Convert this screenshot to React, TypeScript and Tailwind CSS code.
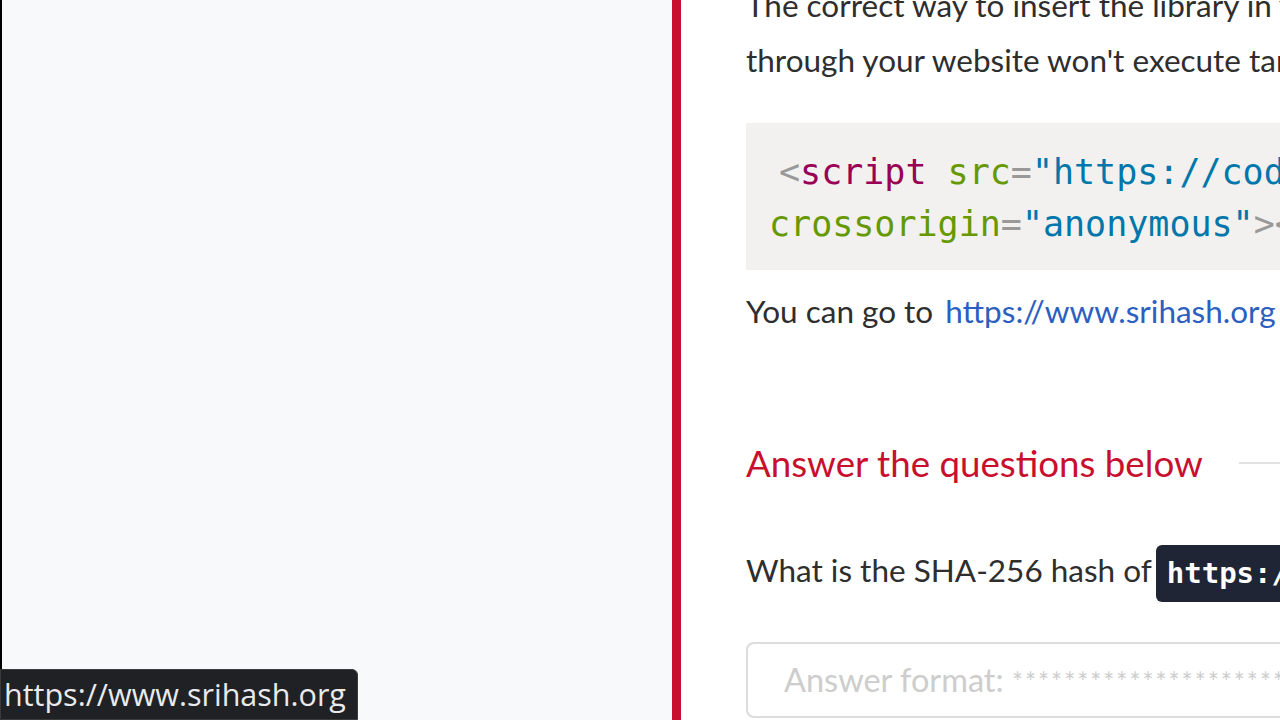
import React from "react";

const sans = "font-['Lato','Noto_Sans',sans-serif]";
const mono = "font-['DejaVu_Sans_Mono','Liberation_Mono',monospace]";

const App = () => {
  return (
    <div className="relative flex h-[720px] w-[1280px] overflow-hidden bg-white">
      {/* left pane */}
      <div className="h-full w-[672px] shrink-0 border-l-2 border-black bg-[#f8f9fb]" />
      {/* accent bar */}
      <div className="h-full w-[9px] shrink-0 bg-[#c8102e]" />

      {/* content pane */}
      <div className={`h-full flex-1 overflow-hidden pl-[65px] ${sans}`}>
        <div className="w-[900px] text-[31.5px] text-[#2e2e2e]">
          <p className="mt-[-22px] leading-[55px] whitespace-nowrap">
            The correct way to insert the library in your HTML file to ensure it is loaded
            <br />
            through your website won't execute tampered code
          </p>

          <pre
            className={`mt-[35px] h-[147px] bg-[#f2f1ef] pt-[23px] pl-[33px] text-[35px] leading-[52px] ${mono}`}
          >
            <span className="text-[#999]">&lt;</span>
            <span className="text-[#905]">script</span>{" "}
            <span className="text-[#690]">src</span>
            <span className="text-[#999]">=</span>
            <span className="text-[#07a]">"https://code.jquery.com/jquery.min.js"</span>
            {"\n"}
            <span className="ml-[-10px] text-[#690]">crossorigin</span>
            <span className="text-[#999]">=</span>
            <span className="text-[#07a]">"anonymous"</span>
            <span className="text-[#999]">&gt;&lt;/script&gt;</span>
          </pre>

          <p className="mt-[19px] whitespace-nowrap leading-[44px]">
            You can go to{" "}
            <a className="ml-[4px] text-[#2c5fc0]" href="#">
              https://www.srihash.org
            </a>{" "}
            to generate your own hashes.
          </p>

          <div className="mt-[105px] flex items-center">
            <h3 className="whitespace-nowrap text-[36.7px] leading-[50px] text-[#c8102e]">
              Answer the questions below
            </h3>
            <div className="ml-[36px] h-[2px] flex-1 bg-[#e2e2e2]" />
          </div>

          <div className="mt-[57px] flex items-center whitespace-nowrap">
            <span className="mb-[8px] leading-[44px]">What is the SHA-256 hash of</span>
            <code
              className={`ml-[4px] rounded-[6px] bg-[#1f2535] px-[11px] py-[8px] text-[29px] font-bold leading-[41px] text-white ${mono}`}
            >
              https://tryhackme.com/libraries/lib.js
            </code>
          </div>

          <div className="mt-[40px] flex h-[76px] items-center rounded-[8px] border-2 border-[#dcdcdc] pl-[36px]">
            <span className="whitespace-nowrap text-[32.5px] text-[#cdcdcd]">
              Answer format: <span className="text-[26px] tracking-[2px]">********************************************</span>
            </span>
          </div>
        </div>
      </div>

      {/* browser status bubble */}
      <div className="absolute bottom-0 left-0 flex h-[51px] w-[358px] items-center rounded-tr-[6px] border border-[#3a3a3a] bg-[#202124] pl-[3px] font-['Open_Sans','Noto_Sans',sans-serif] text-[30.5px] text-[#e8eaed]">
        https://www.srihash.org
      </div>
    </div>
  );
};

export default App;
